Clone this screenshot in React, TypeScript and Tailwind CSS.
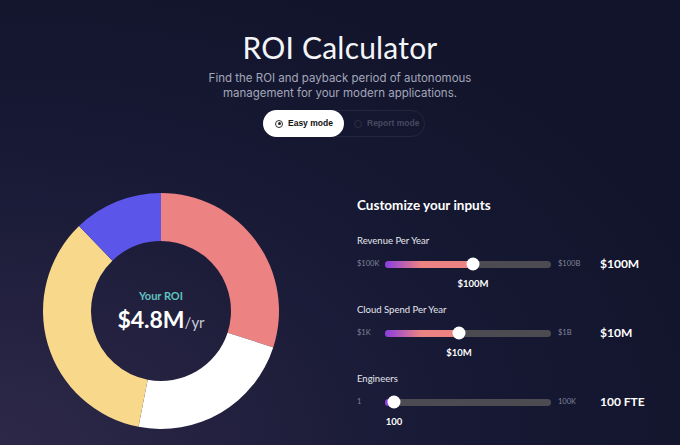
import React from 'react';

const CX = 120;
const CY = 120;
const R_OUT = 118;
const R_IN = 70;

const segments = [
  { from: 0, to: 108, color: '#ec8281' },
  { from: 108, to: 191, color: '#ffffff' },
  { from: 191, to: 316, color: '#f8d98b' },
  { from: 316, to: 360, color: '#5b56e9' },
];

function pt(r: number, deg: number) {
  const a = ((deg - 90) * Math.PI) / 180;
  return [CX + r * Math.cos(a), CY + r * Math.sin(a)];
}

function arcPath(from: number, to: number) {
  const large = to - from > 180 ? 1 : 0;
  const [x1, y1] = pt(R_OUT, from);
  const [x2, y2] = pt(R_OUT, to);
  const [x3, y3] = pt(R_IN, to);
  const [x4, y4] = pt(R_IN, from);
  return `M${x1} ${y1} A${R_OUT} ${R_OUT} 0 ${large} 1 ${x2} ${y2} L${x3} ${y3} A${R_IN} ${R_IN} 0 ${large} 0 ${x4} ${y4} Z`;
}

function Donut() {
  return (
    <div className="relative w-[240px] h-[240px] shrink-0">
      <svg width="240" height="240" viewBox="0 0 240 240">
        {segments.map((s) => (
          <path key={s.from} d={arcPath(s.from, s.to)} fill={s.color} />
        ))}
      </svg>
      <div className="absolute inset-0 flex flex-col items-center justify-center pt-[2px]">
        <span className="text-[11px] font-bold text-[#5fc3bf] leading-[14px]">Your ROI</span>
        <span className="text-[23px] font-bold text-white leading-[28px] mt-[2px]">
          $4.8M<span className="text-[15px] font-normal text-[#c9cad6]">/yr</span>
        </span>
      </div>
    </div>
  );
}

type SliderProps = {
  label: string;
  min: string;
  max: string;
  value: string;
  pct: number;
};

function Slider({ label, min, max, value, pct }: SliderProps) {
  return (
    <div className="flex flex-col">
      <span className="text-[9.5px] text-[#e6e7ee] leading-[12px] h-[12px]">{label}</span>
      <div className="flex items-center h-[12px] mt-[11px]">
        <span className="w-[28px] text-[7.5px] text-[#80849a]">{min}</span>
        <div className="relative w-[166px] h-[7px] rounded-full bg-[#4b4b51]">
          <div
            className="absolute left-0 top-0 h-full rounded-full bg-[linear-gradient(90deg,#8a3de2,#ec8281_36px)]"
            style={{ width: `${pct}%` }}
          />
          <div
            className="absolute top-1/2 w-[13px] h-[13px] -translate-x-1/2 -translate-y-1/2 rounded-full bg-white"
            style={{ left: `${pct}%` }}
          />
          <span
            className="absolute top-[16px] -translate-x-1/2 text-[9.5px] font-bold text-white whitespace-nowrap"
            style={{ left: `${pct}%` }}
          >
            {value.replace(' FTE', '')}
          </span>
        </div>
        <span className="w-[49px] pl-[7px] text-[7.5px] text-[#80849a]">{max}</span>
        <span className="text-[12px] font-bold text-white">{value}</span>
      </div>
      <div className="h-[12px] mt-[6px]" />
    </div>
  );
}

export default function App() {
  return (
    <div
      className="w-[680px] h-[445px] overflow-hidden bg-[radial-gradient(ellipse_at_0%_100%,#2e2848_0%,#181a36_45%,#11142a_80%)] text-white"
      style={{ fontFamily: 'Lato, "Noto Sans", sans-serif' }}
    >
      <header className="flex flex-col items-center pt-[28px]">
        <h1 className="text-[30px] leading-[38px] font-normal tracking-[0.2px] text-[#f4f5f8]">ROI Calculator</h1>
        <p
          className="mt-[5px] text-[11.5px] leading-[15px] text-[#a4a7b9] text-center"
          style={{ fontFamily: 'Inter, sans-serif' }}
        >
          Find the ROI and payback period of autonomous
          <br />
          management for your modern applications.
        </p>
        <div
          className="mt-[9px] ml-[8px] flex items-center w-[162px] h-[27px] rounded-full border border-[#23283f]"
          style={{ fontFamily: '"Liberation Sans", Arial, sans-serif' }}
        >
          <div className="flex items-center gap-[5px] w-[81px] h-[27px] -ml-px rounded-full bg-white pl-[12px]">
            <span className="flex items-center justify-center w-[8px] h-[8px] rounded-full border border-[#333]">
              <span className="w-[3px] h-[3px] rounded-full bg-[#222]" />
            </span>
            <span className="text-[8.5px] font-bold text-[#111]">Easy mode</span>
          </div>
          <div className="flex items-center gap-[5px] pl-[10px]">
            <span className="w-[8px] h-[8px] rounded-full border border-[#2a2e44]" />
            <span className="text-[8.5px] font-bold text-[#454a60]">Report mode</span>
          </div>
        </div>
      </header>

      <main className="flex items-start mt-[54px] pl-[41px]">
        <Donut />
        <div className="flex flex-col ml-[76px] pt-[6px]">
          <h2 className="text-[13.5px] leading-[16px] font-bold text-white">Customize your inputs</h2>
          <div className="mt-[22px] flex flex-col gap-[16px]">
            <Slider label="Revenue Per Year" min="$100K" max="$100B" value="$100M" pct={53} />
            <Slider label="Cloud Spend Per Year" min="$1K" max="$1B" value="$10M" pct={44.6} />
            <Slider label="Engineers" min="1" max="100K" value="100 FTE" pct={5.4} />
          </div>
        </div>
      </main>
    </div>
  );
}
